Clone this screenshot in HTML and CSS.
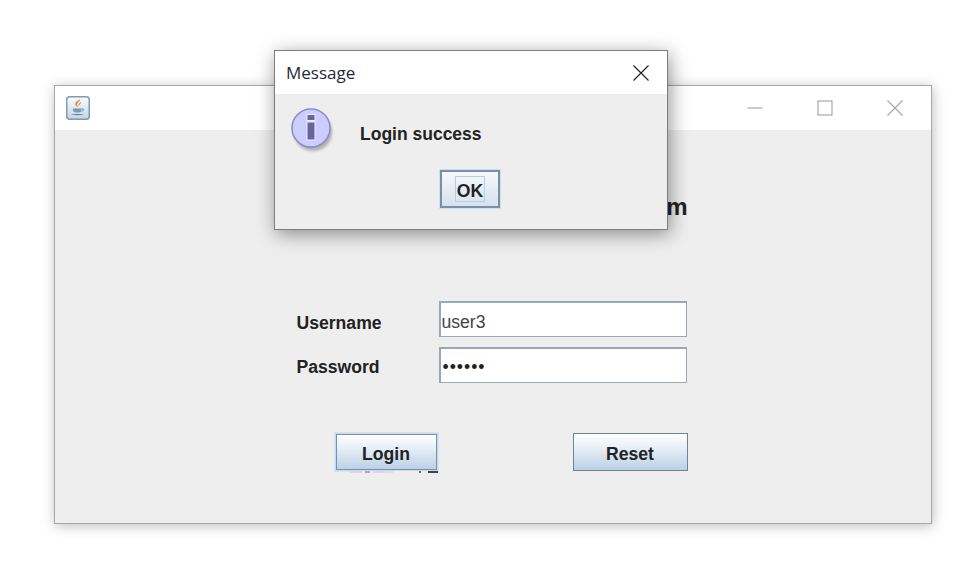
FILE: index.html
```html
<!DOCTYPE html>
<html lang="en">
  <head>
    <meta charset="UTF-8" />
    <meta name="viewport" content="width=device-width, initial-scale=1.0" />
    <title>Login Form</title>
    <link rel="stylesheet" href="styles.css">
  </head>

  <body>
    <div class="window">
      <div class="titlebar">
        <svg class="java-icon" width="24" height="24" viewBox="0 0 24 24">
          <defs>
            <linearGradient id="tile" x1="0" y1="0" x2="0" y2="1">
              <stop offset="0" stop-color="#fafcfe" />
              <stop offset="1" stop-color="#c4d5e5" />
            </linearGradient>
          </defs>
          <rect x="0.75" y="0.75" width="22.5" height="22.5" rx="3" fill="url(#tile)" stroke="#7f9ab3" stroke-width="1.5" />
          <path d="M13.5 3c1.200 2.500-2.500 3.500-2.500 5.500 0 1 .6 1.600 1 2.500-2.400-1-3.400-2.600-2.500-4.300.7-1.300 3.200-2.200 4-3.700z" fill="#e8873a" />
          <path d="M15 6.500c-1.300 .8-2.200 1.600-1.700 3" fill="none" stroke="#ec9a55" stroke-width="1.200" />
          <path d="M7 12.500h8.500v1.500c0 1.600-1.300 2.500-2.500 2.500H9.500C8 16.500 7 15.600 7 14z" fill="#7c99b8" />
          <path d="M15.500 13h1.500c1 0 1 2-1.500 2.200" fill="none" stroke="#6f8fb0" stroke-width="1" />
          <path d="M5 18h12.500c-1 1.500-11 1.500-12.500 0z" fill="#5f80a3" />
        </svg>
        <div class="window-controls">
          <svg width="16" height="16" viewBox="0 0 16 16"><path d="M0.500 8h15" stroke="#a8a8a8" stroke-width="1.200" /></svg>
          <svg width="16" height="16" viewBox="0 0 16 16"><rect x="1" y="1" width="14" height="14" fill="none" stroke="#a8a8a8" stroke-width="1.200" /></svg>
          <svg width="16" height="16" viewBox="0 0 16 16"><path d="M0.500 0.500l15 15M15.500 0.500l-15 15" stroke="#a8a8a8" stroke-width="1.200" /></svg>
        </div>
      </div>

      <div class="content">
        <div class="form">
          <h1>Login Form</h1>
          <div class="fields">
            <label class="label-user">Username</label>
            <div class="field field-user">user3</div>
            <label class="label-pass">Password</label>
            <div class="field field-password">••••••</div>
          </div>
          <div class="actions">
            <button class="btn btn-focused">Login</button>
            <button class="btn btn-reset">Reset</button>
            <div class="ghost"></div>
          </div>
        </div>
      </div>
    </div>

    <div class="dialog">
      <div class="dialog-title">
        <span>Message</span>
        <svg width="16" height="16" viewBox="0 0 16 16"><path d="M0.500 0.500l15 15M15.500 0.500l-15 15" stroke="#222" stroke-width="1.200" /></svg>
      </div>
      <div class="dialog-body">
        <svg class="info-icon" width="46" height="50" viewBox="0 0 46 50">
          <defs>
            <filter id="soft" x="-30%" y="-30%" width="160%" height="160%">
              <feGaussianBlur stdDeviation="1.800" />
            </filter>
          </defs>
          <circle cx="22" cy="24" r="19" fill="#777" opacity="0.55" filter="url(#soft)" />
          <circle cx="20" cy="20" r="19" fill="#ccccff" stroke="#8b8bbd" stroke-width="1.500" />
          <rect x="16" y="6.500" width="8" height="6" fill="#66669a" stroke="#eeeeff" stroke-width="1" />
          <rect x="16" y="14" width="8" height="18" fill="#66669a" stroke="#eeeeff" stroke-width="1" />
        </svg>
        <p class="message">Login success</p>
      </div>
      <div class="dialog-actions">
        <button class="btn btn-ok"><span>OK</span></button>
      </div>
    </div>
  </body>
</html>
```

FILE: styles.css
```css
* {
  margin: 0;
  padding: 0;
  box-sizing: border-box;
}

body {
  font-family: "Liberation Sans", Arial, sans-serif;
  background-color: #fff;
  color: #222;
  height: 586px;
  padding: 85px 0 0 54px;
  overflow: hidden;
}

.window {
  width: 878px;
  height: 439px;
  background-color: #eee;
  border: 1px solid #a6a6a6;
  box-shadow: 1px 2px 12px rgba(0, 0, 0, 0.26);
  display: flex;
  flex-direction: column;
}

.titlebar {
  height: 44px;
  flex-shrink: 0;
  background-color: #fff;
  display: flex;
  align-items: center;
  justify-content: space-between;
  padding: 0 28px 0 11px;
}

.java-icon {
  margin-top: -1px;
}

.window-controls {
  display: flex;
  gap: 54px;
  margin-top: -1px;
}

.content {
  flex: 1;
  display: flex;
  justify-content: center;
  padding-right: 2px;
}

.form {
  width: 391px;
  padding-top: 60px;
}

h1 {
  font-size: 24px;
  line-height: 34px;
  text-align: right;
  margin-bottom: 77px;
}

.fields {
  display: grid;
  grid-template-columns: 142px 248px;
  grid-auto-rows: 36px;
  row-gap: 10px;
  align-items: center;
}

label {
  font-size: 17.600px;
  font-weight: bold;
}

.label-user {
  padding-top: 8px;
}

.label-pass {
  padding-top: 4px;
}

.field {
  height: 36px;
  background-color: #fff;
  border: 1px solid #9aa8b5;
  border-width: 2px 1px 1px 2px;
  font-size: 17.600px;
  line-height: 33px;
  color: #444;
}

.field-user {
  padding-top: 3px;
  padding-left: 1px;
}

.field-password {
  color: #222;
  letter-spacing: 1px;
  padding-top: 2px;
  padding-left: 2px;
}

.actions {
  position: relative;
  display: flex;
  justify-content: space-between;
  align-items: center;
  margin-top: 50px;
  padding-left: 38px;
}

.btn {
  font-family: inherit;
  font-size: 17.600px;
  font-weight: bold;
  color: #222;
  height: 38px;
  padding-top: 4px;
  border: 1px solid #6f8297;
  background: linear-gradient(#fff, #f0f5fa 25%, #bcd1e5);
}

.btn-focused {
  width: 103px;
  border: 2px solid #7890a8;
  outline: 1px solid #c9dcee;
  outline-offset: -1px;
  box-shadow: 0 0 0 1px #d5e3f0;
}

.btn-reset {
  width: 115px;
}

/* leftover paint specks under the login button */
.ghost {
  position: absolute;
  left: 53px;
  top: 38px;
  width: 88px;
  height: 2px;
  background: linear-gradient(90deg,
    #d8d4f2 0, #d8d4f2 12px, #eee 12px, #eee 15px, #a9a6c4 15px, #a9a6c4 20px,
    #eee 20px, #eee 23px, #d8d4f2 23px, #d8d4f2 36px, #ddd 36px, #ddd 43px,
    #eee 43px, #eee 69px, #666 69px, #666 71px, #eee 71px, #eee 78px,
    #444 78px, #444 85px);
}

.dialog {
  position: absolute;
  left: 274px;
  top: 50px;
  width: 394px;
  height: 180px;
  background-color: #eee;
  border: 1px solid #7d7d7d;
  box-shadow: 2px 4px 18px rgba(0, 0, 0, 0.42);
  display: flex;
  flex-direction: column;
}

.dialog-title {
  height: 43px;
  background-color: #fff;
  display: flex;
  align-items: center;
  justify-content: space-between;
  padding: 0 18px 0 11px;
  font-family: "Open Sans", sans-serif;
  font-size: 17px;
  color: #1f2a38;
}

.dialog-body {
  height: 76px;
  display: flex;
  padding: 14px 0 0 16px;
}

.info-icon {
  flex-shrink: 0;
}

.message {
  margin: 14px 0 0 23px;
  font-size: 17.500px;
  font-weight: bold;
  line-height: 24px;
}

.dialog-actions {
  display: flex;
  justify-content: center;
  margin-left: -2px;
}

.btn-ok {
  width: 60px;
  border: 2px solid #7890a8;
  outline: 1px solid #d0deeb;
  background: linear-gradient(#f6f9fc, #d5e2ef);
  padding: 0;
  display: flex;
  justify-content: center;
  align-items: center;
}

.btn-ok span {
  display: block;
  width: 30px;
  height: 26px;
  line-height: 29px;
  border: 1px solid #b8cde2;
}
```
